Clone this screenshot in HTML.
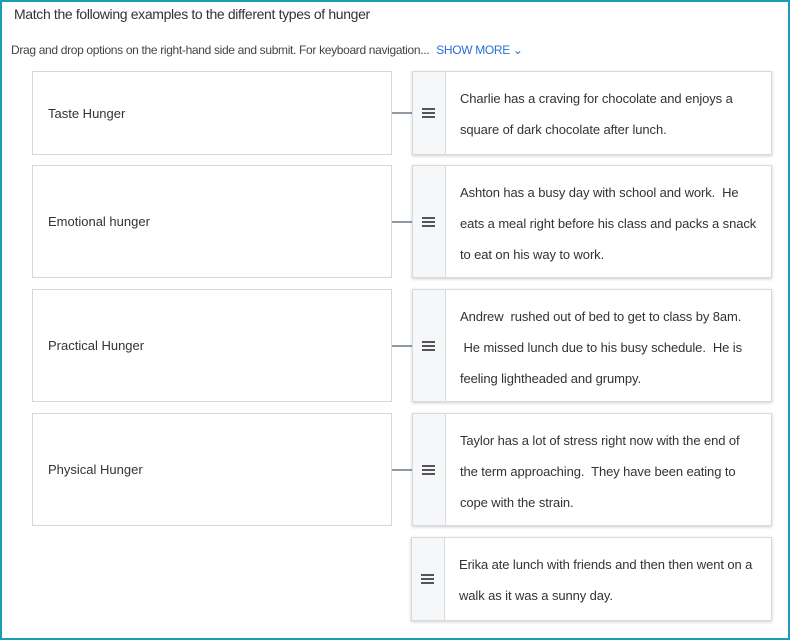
<!DOCTYPE html>
<html><head><style>
body{margin:0;width:790px;height:640px;overflow:hidden;background:#fff;font-family:"Liberation Sans",sans-serif;color:#333}
.frame{position:absolute;left:0;top:0;width:786px;height:636px;border:2px solid #1b9cb6}
.t{position:absolute;left:14px;top:6px;font-size:14px;color:#333;letter-spacing:-0.35px}
.s{position:absolute;left:11px;top:43px;font-size:12px;color:#444;letter-spacing:-0.33px}
.s span{color:#2a6fd6;margin-left:4px}
.l{position:absolute;left:32px;border:1px solid #d5d8dc;box-sizing:border-box;font-size:13px;display:flex;align-items:center;padding-left:15px;width:360px}
.c{position:absolute;left:392px;width:20px;height:2px;background:#8f9aa5}
.r{position:absolute;left:412px;width:360px;box-sizing:border-box;border:1px solid #d8dadd;box-shadow:0 1px 3px rgba(0,0,0,.2);background:#fff;font-size:13px;line-height:31px;letter-spacing:-0.1px}
.h{position:absolute;left:0;top:0;bottom:0;width:32px;background:#f6f7f8;border-right:1px solid #d8dadd}
.h i{position:absolute;left:9px;top:50%;margin-top:-5px;width:13px;height:2px;background:#555;box-shadow:0 4px 0 #555,0 8px 0 #555}
.x{position:absolute;left:47px;top:11px;right:6px}
</style></head><body>
<div class="frame"></div>
<div class="t">Match the following examples to the different types of hunger</div>
<div class="s">Drag and drop options on the right-hand side and submit. For keyboard navigation... <span>SHOW MORE &#8964;</span></div>

<div class="l" style="top:71px;height:84px">Taste Hunger</div>
<div class="c" style="top:112px"></div>
<div class="r" style="top:71px;height:84px"><div class="h"><i></i></div><div class="x">Charlie has a craving for chocolate and enjoys a square of dark chocolate after lunch.</div></div>

<div class="l" style="top:165px;height:113px">Emotional hunger</div>
<div class="c" style="top:221px"></div>
<div class="r" style="top:165px;height:113px"><div class="h"><i></i></div><div class="x">Ashton has a busy day with school and work.&nbsp; He eats a meal right before his class and packs a snack to eat on his way to work.</div></div>

<div class="l" style="top:289px;height:113px">Practical Hunger</div>
<div class="c" style="top:345px"></div>
<div class="r" style="top:289px;height:113px"><div class="h"><i></i></div><div class="x">Andrew&nbsp; rushed out of bed to get to class by 8am.<br>&nbsp;He missed lunch due to his busy schedule.&nbsp; He is feeling lightheaded and grumpy.</div></div>

<div class="l" style="top:413px;height:113px">Physical Hunger</div>
<div class="c" style="top:469px"></div>
<div class="r" style="top:413px;height:113px"><div class="h"><i></i></div><div class="x">Taylor has a lot of stress right now with the end of<br>the term approaching.&nbsp; They have been eating to<br>cope with the strain.</div></div>

<div class="r" style="top:537px;height:84px;left:411px;width:361px"><div class="h"><i></i></div><div class="x">Erika ate lunch with friends and then then went on a walk as it was a sunny day.</div></div>
</body></html>
